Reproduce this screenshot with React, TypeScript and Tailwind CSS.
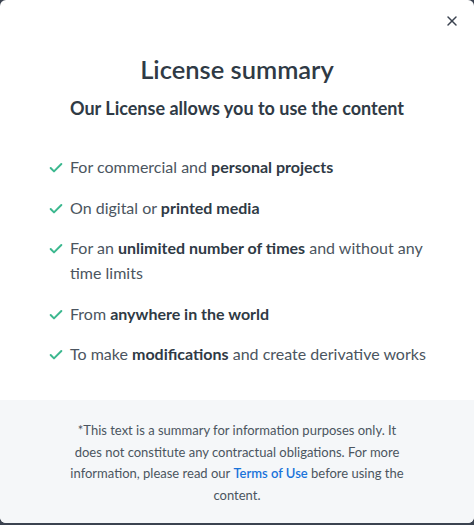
import { X, Check } from 'lucide-react';

const items: { parts: [string, boolean][] }[] = [
  { parts: [['For commercial and ', false], ['personal projects', true]] },
  { parts: [['On digital or ', false], ['printed media', true]] },
  { parts: [['For an ', false], ['unlimited number of times', true], [' and without any time limits', false]] },
  { parts: [['From ', false], ['anywhere in the world', true]] },
  { parts: [['To make ', false], ['modifications', true], [' and create derivative works', false]] },
];

export default function App() {
  return (
    <div className="w-[474px] h-[525px] bg-[#3b4350] overflow-hidden" style={{ fontFamily: 'Lato, "Noto Sans", sans-serif' }}>
      <div className="relative h-[523px] bg-white rounded-md overflow-hidden flex flex-col">
        <button className="absolute right-[14px] top-[13px] text-[#3b4350]">
          <X className="w-[16px] h-[16px]" strokeWidth={2.2} />
        </button>

        <div className="flex-1 px-[48px] pt-[52px]">
          <h2 className="text-center text-[25.5px] leading-[34px] font-semibold text-[#2f3a45]">License summary</h2>
          <p className="mt-[10px] text-center text-[18px] leading-[24px] font-bold text-[#2f3a45]">
            Our License allows you to use the content
          </p>

          <ul className="mt-[34px] flex flex-col gap-[15.5px]">
            {items.map((item, i) => (
              <li key={i} className="flex items-start gap-[6px] text-[16px] leading-[25px] text-[#4b5560]">
                <Check className="w-[16px] h-[16px] mt-[6px] shrink-0 text-[#3cb88f]" strokeWidth={3} />
                <span>
                  {item.parts.map(([t, b], j) =>
                    b ? (
                      <b key={j} className="font-bold text-[#2f3a45]">{t}</b>
                    ) : (
                      <span key={j}>{t}</span>
                    )
                  )}
                </span>
              </li>
            ))}
          </ul>
        </div>

        <div className="h-[123px] bg-[#f5f7f9] flex items-start justify-center pt-[20px]">
          <p className="w-[344px] text-center text-[13px] leading-[21.5px] text-[#4b5560]">
            *This text is a summary for information purposes only. It does not constitute any contractual obligations. For more
            information, please read our <a href="#" className="font-semibold text-[#1a73d9]">Terms of Use</a> before using the
            content.
          </p>
        </div>
      </div>
    </div>
  );
}
